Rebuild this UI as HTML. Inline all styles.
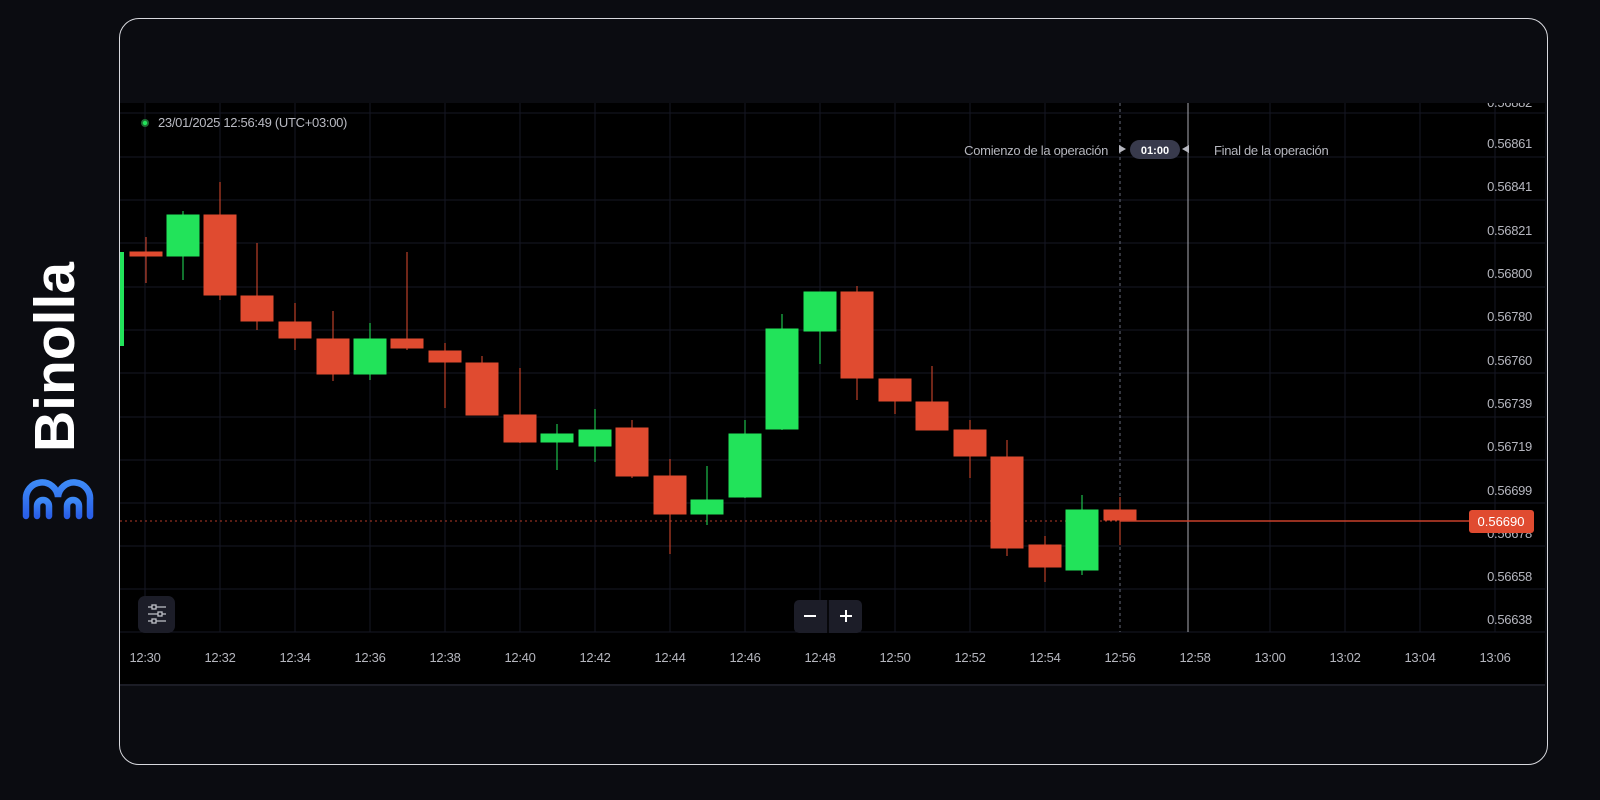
<!DOCTYPE html>
<html><head><meta charset="utf-8"><style>
*{margin:0;padding:0;box-sizing:border-box}
body{width:1600px;height:800px;background:#0b0c11;position:relative;overflow:hidden;font-family:"Liberation Sans",sans-serif}
.card{position:absolute;left:119px;top:18px;width:1429px;height:747px;border:1px solid #d8d9de;border-radius:20px;background:#0b0c11;overflow:hidden}
.logo{position:absolute;left:55px;top:357px;transform:translate(-50%,-50%) rotate(-90deg);color:#fff;font-weight:bold;font-size:57px;white-space:nowrap}
</style></head><body>
<div class="logo">Binolla</div>
<svg style="position:absolute;left:0;top:0" width="120" height="800">
<defs><linearGradient id="g" x1="0" y1="0" x2="0" y2="1"><stop offset="0" stop-color="#3d8af7"/><stop offset="1" stop-color="#2a5fe8"/></linearGradient></defs>
<g fill="none" stroke="url(#g)" stroke-width="6.5" stroke-linecap="round">
<path d="M26,516 V500 A16,16 0 0 1 58,497 A16,16 0 0 1 90,500 V516"/>
<path d="M37,516 V506 A6,6 0 0 1 49,506 V516"/>
<path d="M67,516 V506 A6,6 0 0 1 79,506 V516"/>
</g></svg>
<div class="card"></div>
<svg style="position:absolute;left:0;top:0" width="1600" height="800" font-family="Liberation Sans, sans-serif">
<rect x="120" y="103" width="1425" height="582" fill="#000"/>
<line x1="120" y1="685" x2="1545" y2="685" stroke="#1c1d26" stroke-width="2"/>
<g stroke="#161724" stroke-width="1">
<line x1="120" y1="113" x2="1545" y2="113"/><line x1="120" y1="157" x2="1545" y2="157"/><line x1="120" y1="200" x2="1545" y2="200"/><line x1="120" y1="243" x2="1545" y2="243"/><line x1="120" y1="287" x2="1545" y2="287"/><line x1="120" y1="330" x2="1545" y2="330"/><line x1="120" y1="373" x2="1545" y2="373"/><line x1="120" y1="417" x2="1545" y2="417"/><line x1="120" y1="460" x2="1545" y2="460"/><line x1="120" y1="503" x2="1545" y2="503"/><line x1="120" y1="546" x2="1545" y2="546"/><line x1="120" y1="589" x2="1545" y2="589"/><line x1="120" y1="632" x2="1545" y2="632"/>
<line x1="145" y1="103" x2="145" y2="632"/><line x1="220" y1="103" x2="220" y2="632"/><line x1="295" y1="103" x2="295" y2="632"/><line x1="370" y1="103" x2="370" y2="632"/><line x1="445" y1="103" x2="445" y2="632"/><line x1="520" y1="103" x2="520" y2="632"/><line x1="595" y1="103" x2="595" y2="632"/><line x1="670" y1="103" x2="670" y2="632"/><line x1="745" y1="103" x2="745" y2="632"/><line x1="820" y1="103" x2="820" y2="632"/><line x1="895" y1="103" x2="895" y2="632"/><line x1="970" y1="103" x2="970" y2="632"/><line x1="1045" y1="103" x2="1045" y2="632"/><line x1="1270" y1="103" x2="1270" y2="632"/><line x1="1345" y1="103" x2="1345" y2="632"/><line x1="1420" y1="103" x2="1420" y2="632"/><line x1="1495" y1="103" x2="1495" y2="632"/>
</g>
<line x1="1120" y1="103" x2="1120" y2="632" stroke="#666a7a" stroke-dasharray="3,3"/>
<line x1="1188" y1="103" x2="1188" y2="632" stroke="#aaaab2" stroke-width="1"/>
<line x1="120" y1="521" x2="1120" y2="521" stroke="#b43a28" stroke-dasharray="2,3"/>
<line x1="1120" y1="521" x2="1470" y2="521" stroke="#c8402b" stroke-width="1.5"/>
<g>
<rect x="120" y="252" width="4" height="94" fill="#22e35a"/>
<g fill="#e04b30" stroke="#e04b30">
<line x1="146" y1="237" x2="146" y2="283"/><rect x="130" y="252" width="32" height="4"/>
<line x1="220" y1="182" x2="220" y2="300"/><rect x="204" y="215" width="32" height="80"/>
<line x1="257" y1="243" x2="257" y2="330"/><rect x="241" y="296" width="32" height="25"/>
<line x1="295" y1="303" x2="295" y2="350"/><rect x="279" y="322" width="32" height="16"/>
<line x1="333" y1="311" x2="333" y2="381"/><rect x="317" y="339" width="32" height="35"/>
<line x1="407" y1="252" x2="407" y2="350"/><rect x="391" y="339" width="32" height="9"/>
<line x1="445" y1="343" x2="445" y2="408"/><rect x="429" y="351" width="32" height="11"/>
<line x1="482" y1="356" x2="482" y2="415"/><rect x="466" y="363" width="32" height="52"/>
<line x1="520" y1="368" x2="520" y2="443"/><rect x="504" y="415" width="32" height="27"/>
<line x1="632" y1="420" x2="632" y2="478"/><rect x="616" y="428" width="32" height="48"/>
<line x1="670" y1="459" x2="670" y2="554"/><rect x="654" y="476" width="32" height="38"/>
<line x1="857" y1="286" x2="857" y2="400"/><rect x="841" y="292" width="32" height="86"/>
<line x1="895" y1="379" x2="895" y2="414"/><rect x="879" y="379" width="32" height="22"/>
<line x1="932" y1="366" x2="932" y2="430"/><rect x="916" y="402" width="32" height="28"/>
<line x1="970" y1="420" x2="970" y2="478"/><rect x="954" y="430" width="32" height="26"/>
<line x1="1007" y1="440" x2="1007" y2="556"/><rect x="991" y="457" width="32" height="91"/>
<line x1="1045" y1="536" x2="1045" y2="582"/><rect x="1029" y="545" width="32" height="22"/>
<line x1="1120" y1="497" x2="1120" y2="545"/><rect x="1104" y="510" width="32" height="10"/>
</g>
<g fill="#22e35a" stroke="#22e35a">
<line x1="183" y1="211" x2="183" y2="280"/><rect x="167" y="215" width="32" height="41"/>
<line x1="370" y1="323" x2="370" y2="380"/><rect x="354" y="339" width="32" height="35"/>
<line x1="557" y1="424" x2="557" y2="470"/><rect x="541" y="434" width="32" height="8"/>
<line x1="595" y1="409" x2="595" y2="462"/><rect x="579" y="430" width="32" height="16"/>
<line x1="707" y1="466" x2="707" y2="525"/><rect x="691" y="500" width="32" height="14"/>
<line x1="745" y1="420" x2="745" y2="498"/><rect x="729" y="434" width="32" height="63"/>
<line x1="782" y1="314" x2="782" y2="430"/><rect x="766" y="329" width="32" height="100"/>
<line x1="820" y1="292" x2="820" y2="364"/><rect x="804" y="292" width="32" height="39"/>
<line x1="1082" y1="495" x2="1082" y2="575"/><rect x="1066" y="510" width="32" height="60"/>
</g></g>
<circle cx="145" cy="123" r="4" fill="#1f6b33"/><circle cx="145" cy="123" r="2.2" fill="#22e35a"/>
<text x="158" y="127" fill="#b9bac2" font-size="13" letter-spacing="-0.3">23/01/2025 12:56:49 (UTC+03:00)</text>
<text x="1108" y="155" fill="#b5b6be" font-size="13" text-anchor="end" letter-spacing="-0.3">Comienzo de la operación</text>
<path d="M1119,145 l7,4 l-7,4z" fill="#b5b6be"/>
<rect x="1130" y="140" width="50" height="19" rx="9.5" fill="#383a4c"/>
<text x="1155" y="154" fill="#fff" font-size="11" font-weight="bold" text-anchor="middle">01:00</text>
<path d="M1189,145 l-7,4 l7,4z" fill="#b5b6be"/>
<text x="1214" y="155" fill="#b5b6be" font-size="13" letter-spacing="-0.3">Final de la operación</text>
<g fill="#b5b6be" font-size="13" text-anchor="end" letter-spacing="-0.3">
<text x="1532" y="107">0.56882</text>
<text x="1532" y="148">0.56861</text><text x="1532" y="191">0.56841</text><text x="1532" y="235">0.56821</text><text x="1532" y="278">0.56800</text><text x="1532" y="321">0.56780</text><text x="1532" y="365">0.56760</text><text x="1532" y="408">0.56739</text><text x="1532" y="451">0.56719</text><text x="1532" y="495">0.56699</text><text x="1532" y="538">0.56678</text><text x="1532" y="581">0.56658</text><text x="1532" y="624">0.56638</text>
</g>
<rect x="120" y="90" width="1425" height="13" fill="#0b0c11"/>
<rect x="1469" y="510" width="65" height="23" rx="3" fill="#e04b30"/>
<text x="1501" y="526" fill="#fff" font-size="13" text-anchor="middle">0.56690</text>
<rect x="138" y="596" width="37" height="37" rx="7" fill="#1c1d28"/>
<g stroke="#c0c1c8" stroke-width="1.3" fill="#1c1d28">
<line x1="148" y1="607" x2="166" y2="607"/><line x1="148" y1="614" x2="166" y2="614"/><line x1="148" y1="621" x2="166" y2="621"/>
<rect x="152" y="605" width="4" height="4"/><rect x="158" y="612" width="4" height="4"/><rect x="152" y="619" width="4" height="4"/>
</g>
<rect x="794" y="600" width="68" height="33" rx="5" fill="#1c1d28"/>
<line x1="828" y1="600" x2="828" y2="633" stroke="#000" stroke-width="1.5"/>
<line x1="804" y1="616" x2="816" y2="616" stroke="#fff" stroke-width="2"/>
<line x1="840" y1="616" x2="852" y2="616" stroke="#fff" stroke-width="2"/><line x1="846" y1="610" x2="846" y2="622" stroke="#fff" stroke-width="2"/>
<g fill="#b5b6be" font-size="13" text-anchor="middle" letter-spacing="-0.3">
<text x="145" y="662">12:30</text><text x="220" y="662">12:32</text><text x="295" y="662">12:34</text><text x="370" y="662">12:36</text><text x="445" y="662">12:38</text><text x="520" y="662">12:40</text><text x="595" y="662">12:42</text><text x="670" y="662">12:44</text><text x="745" y="662">12:46</text><text x="820" y="662">12:48</text><text x="895" y="662">12:50</text><text x="970" y="662">12:52</text><text x="1045" y="662">12:54</text><text x="1120" y="662">12:56</text><text x="1195" y="662">12:58</text><text x="1270" y="662">13:00</text><text x="1345" y="662">13:02</text><text x="1420" y="662">13:04</text><text x="1495" y="662">13:06</text>
</g>
</svg>
</body></html>
